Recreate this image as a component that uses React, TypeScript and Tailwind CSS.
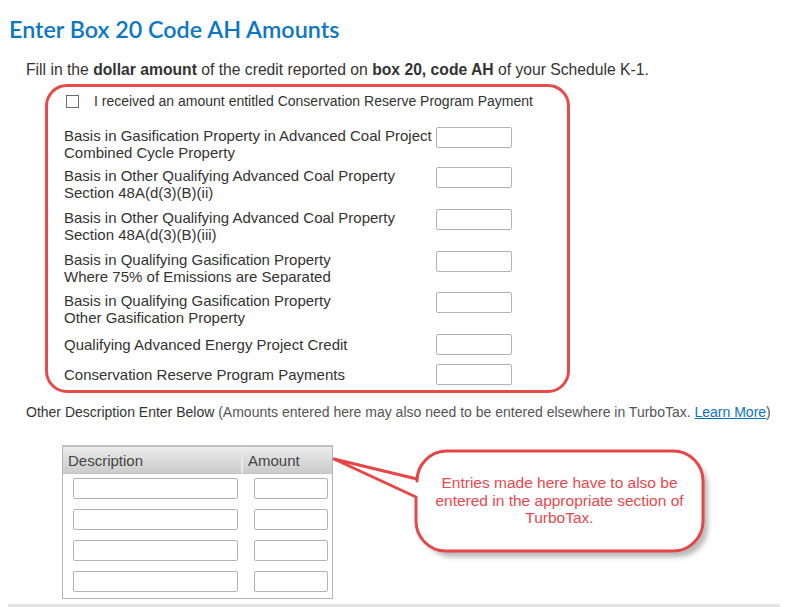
import React from "react";

const rows: { lines: string[]; h: string }[] = [
  { lines: ["Basis in Gasification Property in Advanced Coal Project", "Combined Cycle Property"], h: "h-[40px]" },
  { lines: ["Basis in Other Qualifying Advanced Coal Property", "Section 48A(d(3)(B)(ii)"], h: "h-[42px]" },
  { lines: ["Basis in Other Qualifying Advanced Coal Property", "Section 48A(d(3)(B)(iii)"], h: "h-[42px]" },
  { lines: ["Basis in Qualifying Gasification Property", "Where 75% of Emissions are Separated"], h: "h-[41px]" },
  { lines: ["Basis in Qualifying Gasification Property", "Other Gasification Property"], h: "h-[42px]" },
  { lines: ["Qualifying Advanced Energy Project Credit"], h: "h-[30px]" },
  { lines: ["Conservation Reserve Program Payments"], h: "h-[21px]" },
];

function Field({ w }: { w: string }) {
  return <div className={`${w} h-[21px] shrink-0 bg-white border border-[#b3b3b3] rounded-[2px]`} />;
}

function Callout() {
  return (
    <div className="absolute left-[328px] top-[445px] w-[390px] h-[120px]">
      <svg width="390" height="120" viewBox="0 0 390 120" className="absolute left-0 top-0">
        <defs>
          <filter id="sh" x="-10%" y="-10%" width="130%" height="140%">
            <feGaussianBlur stdDeviation="2.5" />
          </filter>
        </defs>
        <rect x="94" y="12" width="286" height="100" rx="30" fill="#8a8a8a" opacity="0.6" filter="url(#sh)" />
        <path
          d="M118 6 H345 A30 30 0 0 1 375 36 V76 A30 30 0 0 1 345 106 H118 A30 30 0 0 1 88 76 V52 L6 14 L89 34 V36 A30 30 0 0 1 118 6 Z"
          fill="#ffffff"
          stroke="#e64646"
          strokeWidth="3"
          strokeLinejoin="round"
        />
      </svg>
      <div className="absolute left-[88px] top-[29px] w-[287px] text-center text-[15.5px] leading-[17.5px] text-[#e8474d]">
        Entries made here have to also be
        <br />
        entered in the appropriate section of
        <br />
        TurboTax.
      </div>
    </div>
  );
}

export default function App() {
  return (
    <div className="relative w-[795px] h-[607px] overflow-hidden bg-white text-[14px] text-[#333] font-['Liberation_Sans',Arial,sans-serif]">
      <h1 className="mt-[14px] pl-[9px] h-[30px] leading-[30px] text-[23.3px] font-semibold text-[#0b77c5] font-['Lato','Noto_Sans',sans-serif]">
        Enter Box 20 Code AH Amounts
      </h1>

      <p className="mt-[17px] pl-[26px] leading-[18px] text-[15.7px]">
        Fill in the <b>dollar amount</b> of the credit reported on <b>box 20, code AH</b> of your Schedule K-1.
      </p>

      <div className="mt-[5px] ml-[45px] w-[525px] h-[309px] border-[3px] border-[#e84a4a] rounded-[22px]">
        <div className="mt-[5px] flex items-center h-[18px]">
          <div className="ml-[18px] w-[13px] h-[13px] border border-[#6b6b6b] bg-white" />
          <span className="ml-[15px]">I received an amount entitled Conservation Reserve Program Payment</span>
        </div>

        <div className="mt-[17px] pl-[16px] flex flex-col text-[15px]">
          {rows.map((r, i) => (
            <div key={i} className={`${r.h} flex items-start`}>
              <div className={`w-[372px] leading-[17px] whitespace-nowrap ${r.lines.length === 1 ? "pt-[2px]" : "pt-0"}`}>
                {r.lines.map((l, j) => (
                  <div key={j}>{l}</div>
                ))}
              </div>
              <Field w="w-[76px]" />
            </div>
          ))}
        </div>
      </div>

      <p className="mt-[10px] pl-[26px] leading-[18px]">
        Other Description Enter Below{" "}
        <span className="text-[#555]">
          (Amounts entered here may also need to be entered elsewhere in TurboTax.{" "}
          <a className="text-[#0a72c0] underline">Learn More</a>)
        </span>
      </p>

      <div className="mt-[24px] ml-[62px] w-[271px] h-[154px] border border-[#b5b5b5] border-t-2 border-t-[#c2c2c2]">
        <div className="flex h-[27px] bg-gradient-to-b from-[#ececec] to-[#cbcbcb] border-b border-[#c4c4c4] text-[#444] text-[15px]">
          <div className="w-[180px] pl-[5px] leading-[27px] border-r-2 border-[#e8e8e8]">Description</div>
          <div className="flex-1 pl-[5px] leading-[27px]">Amount</div>
        </div>
        <div className="pt-[4px] flex flex-col gap-[10px]">
          {[0, 1, 2, 3].map((i) => (
            <div key={i} className="flex pl-[10px] h-[21px]">
              <Field w="w-[165px]" />
              <div className="ml-[16px]">
                <Field w="w-[74px]" />
              </div>
            </div>
          ))}
        </div>
      </div>

      <div className="mt-[5px] ml-[8px] w-[772px] h-[3px] bg-[#e3e3e3]" />

      <Callout />
    </div>
  );
}
